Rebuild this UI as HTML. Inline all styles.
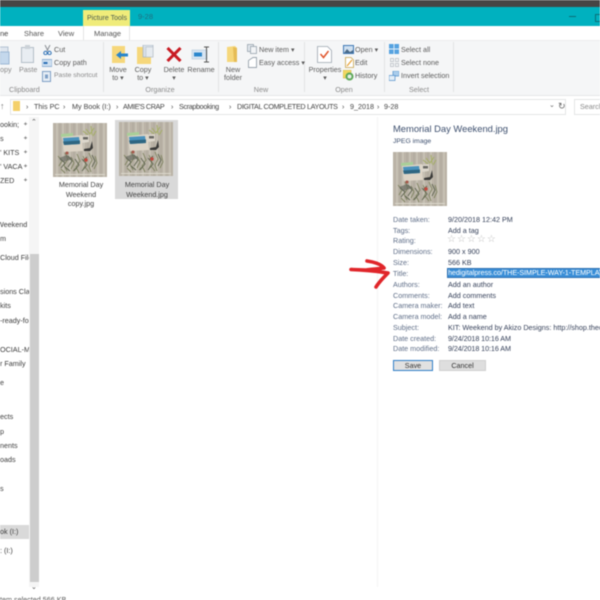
<!DOCTYPE html>
<html><head><meta charset="utf-8"><style>
html,body{margin:0;padding:0;background:#fff}
#p{position:relative;width:600px;height:600px;overflow:hidden;background:#fff;font-family:"Liberation Sans",sans-serif;font-size:7.2px;color:#3c3c3c;filter:blur(.4px)}
#p div,#p svg{position:absolute}
.t{position:absolute;white-space:nowrap;line-height:10px}
.l{color:#5f6e88}.v{color:#36415a}
.c{text-align:center}
.gl{color:#8a8a8a}
.n{color:#3c3c3c}
.r{color:#5c5c5c}
.a{color:#444;top:102px}
</style></head><body><div id="p">
<svg width="0" height="0" style="position:absolute"><defs>
<g id="th">
<rect width="54" height="54" fill="#bab3a6"/>
<g stroke="#cbc6ba" stroke-width="1.300"><path d="M4 0V54M10 0V54M17 0V54M24 0V54M31 0V54M38 0V54M45 0V54M51 0V54"/></g>
<g stroke="#a8a396" stroke-width=".6"><path d="M7 0V54M14 0V54M21 0V54M28 0V54M35 0V54M42 0V54M48 0V54"/></g>
<g fill="none" stroke-width=".9">
<path d="M5 33L9 38L6 43M12 30L15 36L11 42L14 48M18 34L21 40L18 46M24 31L27 38L23 44L26 50M30 33L33 40L30 47M36 30L39 37L36 43L38 49M42 33L44 40L41 46M8 46L12 50M20 48L24 44M32 44L36 49" stroke="#7f8360"/>
<path d="M7 36L12 40L8 45M15 33L19 38L15 44M22 36L26 42L21 48M29 36L34 42L29 48M39 32L42 38L39 44M12 44L17 48M34 34L30 38" stroke="#5e6450"/>
<path d="M33 6L37 11L41 5M38 3L39 12M43 8L40 13M30 8L35 12" stroke="#a3ad62"/>
</g>
<path d="M9 14L29 12L30 28L11 29Z" fill="#ddd4c6"/>
<path d="M10 15L26 14L27 21L11 22Z" fill="#4a92bd"/>
<path d="M10 18.500L27 17.500L27 21L11 22Z" fill="#2f6681"/>
<path d="M8 11L20 10L20 13L8 14Z" fill="#a9cf98"/>
<path d="M28 13L36 12L36 19L29 20Z" fill="#ddd7cc"/>
<path d="M30 14L35 14L35 16.500L30 16.500Z" fill="#6a6a64"/>
<path d="M31 26L37 25L39 18L40 25L37 28L31 28Z" fill="#3a3a38"/>
<circle cx="14" cy="30" r="1.500" fill="#a5574a"/>
<circle cx="33" cy="37" r="1.700" fill="#c4463c"/>
<path d="M6 35L14 32L20 36L10 39Z" fill="#62665a" opacity=".65"/>
<rect x="2" y="51" width="50" height="1" fill="#dcd8cd"/>
</g></defs></svg>

<!-- title bars -->
<div style="left:0;top:0;width:600px;height:7px;background:#474545"></div>
<div style="left:0;top:7px;width:600px;height:19px;background:#00b1bf"></div>
<div style="left:83px;top:10px;width:47px;height:16px;background:#f0ec7a"></div>
<div class="t" style="left:87px;top:14px;color:#4a5a50;font-size:7px">Picture Tools</div>
<div class="t" style="left:138px;top:12px;color:#1f6f80;font-size:7.500px">9-28</div>
<div style="left:569px;top:16px;width:7px;height:1px;background:#0a6f78"></div>
<div style="left:595px;top:14px;width:5px;height:6px;border:1px solid #0a6f78;border-right:0"></div>

<!-- tabs -->
<div class="t" style="left:0;top:29px;font-size:7.500px">ne</div>
<div class="t" style="left:24px;top:29px;font-size:7.500px;color:#555">Share</div>
<div class="t" style="left:58px;top:29px;font-size:7.500px;color:#555">View</div>
<div style="left:83px;top:26px;width:47px;height:14px;background:#fff;border-right:1px solid #e4e4e4;border-left:1px solid #e4e4e4;box-sizing:border-box"></div>
<div class="t" style="left:94px;top:29px;font-size:7.500px;color:#555">Manage</div>

<!-- ribbon -->
<div style="left:0;top:40px;width:600px;height:56px;background:#f5f6f7;border-bottom:1px solid #e6e7e8;border-top:1px solid #eceded;box-sizing:border-box"></div>
<div style="left:103px;top:42px;width:1px;height:50px;background:#e2e3e4"></div>
<div style="left:218px;top:42px;width:1px;height:50px;background:#e2e3e4"></div>
<div style="left:304px;top:42px;width:1px;height:50px;background:#e2e3e4"></div>
<div style="left:384px;top:42px;width:1px;height:50px;background:#e2e3e4"></div>
<div style="left:453px;top:42px;width:1px;height:50px;background:#e2e3e4"></div>

<!-- clipboard -->
<svg style="left:0;top:44px" width="12" height="22"><rect x="-6" y="3" width="14" height="17" fill="#dfe6ee" stroke="#b3c2d2"/><rect x="0" y="8" width="9" height="12" fill="#c4d8ec" stroke="#9cb8d4"/></svg>
<div class="t gl" style="left:0;top:65px">opy</div>
<svg style="left:21px;top:45px" width="14" height="19"><rect x=".5" y="2.500" width="12" height="15" fill="#e8edf2" stroke="#b4bec8"/><rect x="4" y="0" width="5" height="4" fill="#ccd2d8"/></svg>
<div class="t gl" style="left:19px;top:65px">Paste</div>
<svg style="left:43px;top:45px" width="9" height="10"><path d="M2 0L5 6M7 0L4 6" stroke="#8a8f95" fill="none"/><circle cx="2.500" cy="8" r="1.700" fill="none" stroke="#2a6fb5"/><circle cx="6.500" cy="8" r="1.700" fill="none" stroke="#2a6fb5"/></svg>
<div class="t r" style="left:54px;top:45px">Cut</div>
<svg style="left:42px;top:59px" width="10" height="8"><rect width="10" height="7" y=".5" fill="#cfe0f0" stroke="#6f9bc8" stroke-width=".7"/><rect x="1.500" y="3" width="4" height="2" fill="#2a6fb5"/></svg>
<div class="t r" style="left:54px;top:58px">Copy path</div>
<svg style="left:42px;top:71px" width="9" height="11"><rect x=".5" y=".5" width="8" height="10" fill="#e6edf5" stroke="#7fa0c6"/><rect x="3" y="3.500" width="3" height="4" fill="#7fa0c6"/></svg>
<div class="t gl" style="left:54px;top:71px;font-size:6.800px">Paste shortcut</div>
<div class="t gl c" style="left:9px;top:85px;width:30px">Clipboard</div>

<!-- organize -->
<svg style="left:112px;top:46px" width="16" height="18"><rect width="13" height="17" fill="#f6d77b"/><path d="M4 9L9 5V7.500H16V10.500H9V13Z" fill="#2a86cc"/></svg>
<div class="t c r" style="left:106px;top:66px;width:24px;line-height:8px">Move<br>to ▾</div>
<svg style="left:137px;top:45px" width="17" height="19"><rect y="2" width="14" height="17" fill="#f6d77b"/><rect x="6" y="0" width="10" height="12" fill="#d6dfe8" stroke="#a7b3bf" stroke-width=".7"/><rect x="9" y="2" width="7" height="10" fill="#e6ebf0" stroke="#b7c0c9" stroke-width=".6"/></svg>
<div class="t c r" style="left:131px;top:66px;width:24px;line-height:8px">Copy<br>to ▾</div>
<svg style="left:166px;top:47px" width="16" height="15"><path d="M1.500 1L14.500 14M14.500 1L1.500 14" stroke="#c81a22" stroke-width="3"/></svg>
<div class="t c r" style="left:161px;top:66px;width:26px;line-height:8px">Delete<br>▾</div>
<svg style="left:191px;top:46px" width="19" height="17"><rect x="1" y="4" width="15" height="9" fill="#d6e4f2" stroke="#b5c8da" stroke-width=".6"/><rect x="3" y="6.500" width="8" height="4" fill="#2a86cc"/><path d="M13 1H18M15.500 1V16M13 16H18" stroke="#555" fill="none"/></svg>
<div class="t c r" style="left:185px;top:66px;width:32px;line-height:8px">Rename</div>
<div class="t gl c" style="left:145px;top:85px;width:30px">Organize</div>

<!-- new -->
<svg style="left:226px;top:46px" width="12" height="17"><path d="M1 1L9 0L11 2V16L1 16Z" fill="#f6d77b"/><path d="M7 1L11 2V16H8Z" fill="#e6bc55"/></svg>
<div class="t c r" style="left:221px;top:66px;width:24px;line-height:8px">New<br>folder</div>
<svg style="left:247px;top:44px" width="10" height="10"><rect x=".5" y=".5" width="6" height="7" fill="#e4e9ee" stroke="#8b97a3" stroke-width=".7"/><rect x="3.500" y="2.500" width="6" height="7" fill="#f2f4f6" stroke="#8b97a3" stroke-width=".7"/></svg>
<div class="t r" style="left:259px;top:45px">New item ▾</div>
<svg style="left:248px;top:57px" width="9" height="11"><path d="M.5 3.500L5 .5L8.500 .5V10.500H.5Z" fill="#fff" stroke="#7b8895" stroke-width=".7"/></svg>
<div class="t r" style="left:259px;top:58px">Easy access ▾</div>
<div class="t gl c" style="left:246px;top:85px;width:30px">New</div>

<!-- open -->
<svg style="left:317px;top:46px" width="15" height="17"><path d="M.5.500H10.500L14.500 4.500V16.500H.5Z" fill="#fff" stroke="#9ba5af" stroke-width=".8"/><path d="M3.500 8L6.500 11.500L11.500 5" stroke="#e0562d" stroke-width="1.500" fill="none"/></svg>
<div class="t c r" style="left:308px;top:66px;width:34px;line-height:8px">Properties<br>▾</div>
<svg style="left:343px;top:45px" width="11" height="9"><rect x=".5" y=".5" width="10" height="8" fill="#cfe0f0" stroke="#3f79b5"/><path d="M1 8L4 4L7 7L10 5V8Z" fill="#4a6a88"/></svg>
<div class="t r" style="left:355px;top:45px">Open ▾</div>
<svg style="left:345px;top:57px" width="9" height="11"><path d="M.5.500H6L8.500 3V10.500H.5Z" fill="#fff" stroke="#c9a34a" stroke-width=".8"/><path d="M2 9L7 3" stroke="#e8a030" stroke-width="1.200"/></svg>
<div class="t r" style="left:355px;top:58px">Edit</div>
<svg style="left:343px;top:70px" width="11" height="11"><rect x="0" y="0" width="8" height="8" fill="#f0d760" stroke="#c6a93a" stroke-width=".5"/><circle cx="6.500" cy="6.500" r="4" fill="#5ea85a"/><circle cx="6.500" cy="6.500" r="2" fill="#e8efe8"/></svg>
<div class="t r" style="left:355px;top:71px">History</div>
<div class="t gl c" style="left:329px;top:85px;width:30px">Open</div>

<!-- select -->
<svg style="left:389px;top:44px" width="10" height="10"><rect width="10" height="10" fill="#55a2e0"/><path d="M5 0V10M0 5H10" stroke="#e4f0fa" stroke-width=".9"/></svg>
<div class="t r" style="left:401px;top:45px">Select all</div>
<svg style="left:390px;top:58px" width="9" height="9"><path d="M.5.500H3.500V3.500H.5ZM5.500.500H8.500V3.500H5.500ZM.5 5.500H3.500V8.500H.5ZM5.500 5.500H8.500V8.500H5.500Z" fill="none" stroke="#b6bcc2" stroke-width=".7"/></svg>
<div class="t r" style="left:401px;top:58px">Select none</div>
<svg style="left:389px;top:71px" width="10" height="10"><rect x="4" y="0" width="6" height="5" fill="#aacdec" stroke="#4b8cc9" stroke-width=".7"/><rect x="0" y="4.500" width="6" height="5" fill="#e4eef7" stroke="#4b8cc9" stroke-width=".7"/></svg>
<div class="t r" style="left:401px;top:71px">Invert selection</div>
<div class="t gl c" style="left:404px;top:85px;width:30px">Select</div>

<!-- address bar -->
<div class="t" style="left:0;top:101px;color:#777;font-size:9px">↑</div>
<div style="left:10px;top:99px;width:556px;height:16px;background:#fff;border:1px solid #e4e5e6;box-sizing:border-box"></div>
<div style="left:13px;top:101px;width:7px;height:10px;background:#f4d06a"></div>
<div class="t a" style="left:26px">›</div>
<div class="t a" style="left:34px">This PC</div>
<div class="t a" style="left:63px">›</div>
<div class="t a" style="left:72px">My Book (I:)</div>
<div class="t a" style="left:116px">›</div>
<div class="t a" style="left:123px;letter-spacing:-.4px">AMIE'S CRAP</div>
<div class="t a" style="left:171px">›</div>
<div class="t a" style="left:179px;letter-spacing:-.35px">Scrapbooking</div>
<div class="t a" style="left:229px">›</div>
<div class="t a" style="left:237px;letter-spacing:-.33px">DIGITAL COMPLETED LAYOUTS</div>
<div class="t a" style="left:342px">›</div>
<div class="t a" style="left:350px">9_2018</div>
<div class="t a" style="left:377px">›</div>
<div class="t a" style="left:384px">9-28</div>
<div class="t" style="left:549px;top:101px;color:#666;font-size:7px">⌄</div>
<div class="t" style="left:558px;top:101px;color:#666;font-size:9px">↻</div>
<div style="left:574px;top:99px;width:30px;height:16px;background:#fff;border:1px solid #e4e5e6;box-sizing:border-box"></div>
<div class="t" style="left:580px;top:102px;color:#8a8a8a">Search</div>

<!-- nav pane -->
<div class="t n" style="left:0;top:120px">ookin;</div>
<div class="t n" style="left:0;top:134px">s</div>
<div class="t n" style="left:0;top:148px">' KITS</div>
<div class="t n" style="left:0;top:162px">' VACA</div>
<div class="t n" style="left:0;top:176px">ZED</div>
<div class="t gl" style="left:23px;top:120px;font-size:6px">✦</div>
<div class="t gl" style="left:23px;top:134px;font-size:6px">✦</div>
<div class="t gl" style="left:23px;top:148px;font-size:6px">✦</div>
<div class="t gl" style="left:23px;top:162px;font-size:6px">✦</div>
<div class="t gl" style="left:23px;top:176px;font-size:6px">✦</div>
<div class="t n" style="left:-3px;top:220px">Weekend</div>
<div class="t n" style="left:0;top:234px">m</div>
<div class="t n" style="left:0;top:253px;width:29px;overflow:hidden">Cloud Files</div>
<div class="t n" style="left:0;top:287px;width:29px;overflow:hidden">sions Class</div>
<div class="t n" style="left:0;top:301px">kits</div>
<div class="t n" style="left:0;top:316px;width:29px;overflow:hidden">-ready-for</div>
<div class="t n" style="left:0;top:345px;width:29px;overflow:hidden">OCIAL-MI</div>
<div class="t n" style="left:0;top:359px">r Family</div>
<div class="t n" style="left:0;top:378px">e</div>
<div class="t n" style="left:0;top:412px">ects</div>
<div class="t n" style="left:0;top:427px">p</div>
<div class="t n" style="left:0;top:441px">nents</div>
<div class="t n" style="left:0;top:455px">oads</div>
<div class="t n" style="left:0;top:484px">s</div>
<div style="left:0;top:525px;width:29px;height:14px;background:#d9d9d9"></div>
<div class="t n" style="left:0;top:527px">ok (I:)</div>
<div class="t n" style="left:0;top:546px">: (I:)</div>
<div style="left:29px;top:117px;width:10px;height:470px;background:#f5f5f5"></div>
<div style="left:30px;top:254px;width:9px;height:328px;background:#cdcdcd"></div>
<div class="t" style="left:31px;top:118px;color:#555;font-size:7px">⌃</div>
<div class="t" style="left:31px;top:583px;color:#555;font-size:7px">⌄</div>

<!-- files -->
<svg style="left:53px;top:123px" width="55" height="55"><use href="#th"/></svg>
<div class="t c" style="left:46px;top:180px;width:70px;color:#444;line-height:9.500px">Memorial Day<br>Weekend<br>copy.jpg</div>
<div style="left:115px;top:120px;width:63px;height:79px;background:#d9d9d9"></div>
<svg style="left:119px;top:122px" width="55" height="55"><use href="#th"/></svg>
<div class="t c" style="left:112px;top:180px;width:70px;color:#444;line-height:9.500px">Memorial Day<br>Weekend.jpg</div>

<!-- details -->
<div style="left:377px;top:117px;width:1px;height:470px;background:#f4f4f4"></div>
<div class="t" style="left:393px;top:123px;font-size:9.400px;line-height:12px;color:#3d4f6e">Memorial Day Weekend.jpg</div>
<div class="t" style="left:393px;top:137px;font-size:6.800px;color:#3d4f6e">JPEG image</div>
<svg style="left:393px;top:152px" width="56" height="56"><use href="#th"/></svg>

<div class="t l" style="left:393px;top:215px">Date taken:</div><div class="t v" style="left:448px;top:215px">9/20/2018 12:42 PM</div>
<div class="t l" style="left:393px;top:226px">Tags:</div><div class="t v" style="left:448px;top:226px">Add a tag</div>
<div class="t l" style="left:393px;top:236px">Rating:</div><div class="t" style="left:447px;top:235px;color:#bdbdbd;font-size:10px;letter-spacing:1px;font-family:'DejaVu Sans',sans-serif">☆☆☆☆☆</div>
<div class="t l" style="left:393px;top:247px">Dimensions:</div><div class="t v" style="left:448px;top:247px">900 x 900</div>
<div class="t l" style="left:393px;top:258px">Size:</div><div class="t v" style="left:448px;top:258px">566 KB</div>
<div class="t l" style="left:393px;top:269px">Title:</div>
<div style="left:447px;top:268px;width:153px;height:10px;background:#3a8fd8;border:1px solid #2d6fb0;box-sizing:border-box;border-right:0"></div>
<div class="t" style="left:448px;top:268px;color:#fff;width:152px;overflow:hidden;letter-spacing:-.06px">hedigitalpress.co/THE-SIMPLE-WAY-1-TEMPLATE</div>
<div class="t l" style="left:393px;top:280px">Authors:</div><div class="t v" style="left:448px;top:280px">Add an author</div>
<div class="t l" style="left:393px;top:291px">Comments:</div><div class="t v" style="left:448px;top:291px">Add comments</div>
<div class="t l" style="left:393px;top:301px">Camera maker:</div><div class="t v" style="left:448px;top:301px">Add text</div>
<div class="t l" style="left:393px;top:312px">Camera model:</div><div class="t v" style="left:448px;top:312px">Add a name</div>
<div class="t l" style="left:393px;top:323px">Subject:</div><div class="t v" style="left:448px;top:323px;width:152px;overflow:hidden">KIT: Weekend by Akizo Designs: http://shop.thedigitalpress</div>
<div class="t l" style="left:393px;top:334px">Date created:</div><div class="t v" style="left:448px;top:334px;letter-spacing:-.08px">9/24/2018 10:16 AM</div>
<div class="t l" style="left:393px;top:344px">Date modified:</div><div class="t v" style="left:448px;top:344px;letter-spacing:-.08px">9/24/2018 10:16 AM</div>

<div class="t c" style="left:393px;top:360px;width:40px;height:11px;line-height:10px;background:#e1e1e1;border:1px solid #2f7fc8;box-sizing:border-box;color:#333">Save</div>
<div class="t c" style="left:439px;top:360px;width:47px;height:11px;line-height:10px;background:#dedede;border:1px solid #cfcfcf;box-sizing:border-box;color:#333">Cancel</div>

<!-- red arrow -->
<svg style="left:345px;top:255px" width="52" height="36"><path d="M22 6C29 7 36 9 39 13C33 14 27 14 21 15L6 14.500C18 15 31 16 43 18C38 23 34 27 31 32" fill="none" stroke="#e0252a" stroke-width="3.600" stroke-linecap="round" stroke-linejoin="round"/></svg>

<!-- status -->
<div class="t" style="left:0;top:595px;color:#555">tem selected  566 KB</div>
</div></body></html>
